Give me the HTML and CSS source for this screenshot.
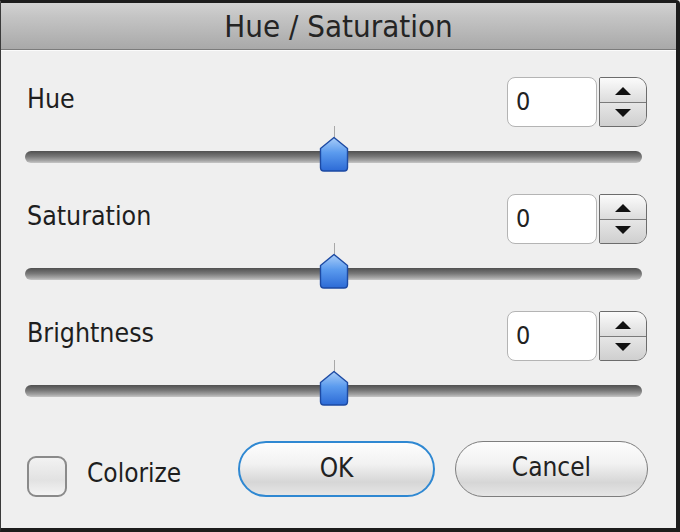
FILE: index.html
```html
<!DOCTYPE html>
<html>
<head>
<meta charset="utf-8">
<link rel="stylesheet" href="styles.css">
</head>
<body>
<div class="dialog">
  <div class="titlebar">Hue / Saturation</div>
  <div class="content">
    <div class="group">
      <div class="header">
        <span class="label">Hue</span>
        <div class="spin">
          <div class="field">0</div>
          <div class="stepper">
            <div class="step"><span class="arrow up"></span></div>
            <div class="step"><span class="arrow down"></span></div>
          </div>
        </div>
      </div>
      <div class="slider">
        <div class="track"></div>
        <div class="tick"></div>
        <svg class="thumb" width="32" height="37" viewBox="0 0 32 37">
          <defs>
            <linearGradient id="tg1" x1="0" y1="0" x2="0" y2="1">
              <stop offset="0" stop-color="#a9cdf8"/>
              <stop offset="0.45" stop-color="#5b9bee"/>
              <stop offset="1" stop-color="#2c6ad6"/>
            </linearGradient>
          </defs>
          <path d="M16 1.5 L29.5 12.5 V31.5 Q29.5 35 26 35 H6 Q2.5 35 2.5 31.5 V12.5 Z" fill="url(#tg1)" stroke="#1d4aa3" stroke-width="1.4" stroke-linejoin="round"/>
        </svg>
      </div>
    </div>
    <div class="group">
      <div class="header">
        <span class="label">Saturation</span>
        <div class="spin">
          <div class="field">0</div>
          <div class="stepper">
            <div class="step"><span class="arrow up"></span></div>
            <div class="step"><span class="arrow down"></span></div>
          </div>
        </div>
      </div>
      <div class="slider">
        <div class="track"></div>
        <div class="tick"></div>
        <svg class="thumb" width="32" height="37" viewBox="0 0 32 37">
          <defs>
            <linearGradient id="tg2" x1="0" y1="0" x2="0" y2="1">
              <stop offset="0" stop-color="#a9cdf8"/>
              <stop offset="0.45" stop-color="#5b9bee"/>
              <stop offset="1" stop-color="#2c6ad6"/>
            </linearGradient>
          </defs>
          <path d="M16 1.5 L29.5 12.5 V31.5 Q29.5 35 26 35 H6 Q2.5 35 2.5 31.5 V12.5 Z" fill="url(#tg2)" stroke="#1d4aa3" stroke-width="1.4" stroke-linejoin="round"/>
        </svg>
      </div>
    </div>
    <div class="group">
      <div class="header">
        <span class="label">Brightness</span>
        <div class="spin">
          <div class="field">0</div>
          <div class="stepper">
            <div class="step"><span class="arrow up"></span></div>
            <div class="step"><span class="arrow down"></span></div>
          </div>
        </div>
      </div>
      <div class="slider">
        <div class="track"></div>
        <div class="tick"></div>
        <svg class="thumb" width="32" height="37" viewBox="0 0 32 37">
          <defs>
            <linearGradient id="tg3" x1="0" y1="0" x2="0" y2="1">
              <stop offset="0" stop-color="#a9cdf8"/>
              <stop offset="0.45" stop-color="#5b9bee"/>
              <stop offset="1" stop-color="#2c6ad6"/>
            </linearGradient>
          </defs>
          <path d="M16 1.5 L29.5 12.5 V31.5 Q29.5 35 26 35 H6 Q2.5 35 2.5 31.5 V12.5 Z" fill="url(#tg3)" stroke="#1d4aa3" stroke-width="1.4" stroke-linejoin="round"/>
        </svg>
      </div>
    </div>
    <div class="footer">
      <div class="check"></div>
      <span class="check-label">Colorize</span>
      <div class="buttons">
        <div class="btn btn-default">OK</div>
        <div class="btn">Cancel</div>
      </div>
    </div>
  </div>
</div>
</body>
</html>
```
FILE: styles.css
```css
html, body {
  margin: 0;
  padding: 0;
  background: #efefef;
}
.dialog {
  width: 680px;
  height: 532px;
  box-sizing: border-box;
  border-top: 3px solid #1c1c1c;
  border-right: 4px solid #1c1c1c;
  border-bottom: 4px solid #1c1c1c;
  border-left: 1px solid #3a3a3a;
  border-top-right-radius: 4px;
  background: #efefef;
  font-family: "DejaVu Sans Condensed", "DejaVu Sans", sans-serif;
  font-stretch: condensed;
  color: #1e1e1e;
  display: flex;
  flex-direction: column;
  overflow: hidden;
}
.titlebar {
  height: 46px;
  flex: none;
  background: linear-gradient(#d2d2d2 0%, #c4c4c4 30%, #a9a9a9 100%);
  border-bottom: 1px solid #7c7c7c;
  box-shadow: 0 1px 0 #fbfbfb;
  text-align: center;
  font-size: 31px;
  line-height: 46px;
  color: #242424;
}
.content {
  padding: 27px 29px 0 24px;
  display: flex;
  flex-direction: column;
}
.group {
  display: flex;
  flex-direction: column;
  margin-bottom: 17px;
}
.header {
  height: 50px;
  display: flex;
  align-items: center;
  justify-content: space-between;
}
.label {
  font-size: 26.5px;
  padding-left: 2px;
  margin-top: -8px;
}
.spin {
  display: flex;
  gap: 2px;
  height: 50px;
}
.field {
  width: 90px;
  box-sizing: border-box;
  background: #fff;
  border: 1px solid #b4b4b4;
  border-radius: 8px;
  font-size: 25px;
  line-height: 48px;
  padding-left: 8px;
  color: #222;
}
.stepper {
  width: 48px;
  box-sizing: border-box;
  border: 1px solid #6c6c6c;
  border-radius: 2px 11px 11px 2px;
  display: flex;
  flex-direction: column;
  overflow: hidden;
}
.step {
  flex: 1;
  display: flex;
  align-items: center;
  justify-content: center;
  background: linear-gradient(#fbfbfb, #dcdcdc);
}
.step + .step {
  border-top: 1px solid #7a7a7a;
  background: linear-gradient(#e6e6e6, #cfcfcf);
}
.arrow {
  width: 0;
  height: 0;
  border-left: 8px solid transparent;
  border-right: 8px solid transparent;
}
.arrow.up {
  border-bottom: 8px solid #111;
  margin-top: 2px;
}
.arrow.down {
  border-top: 8px solid #111;
  margin-bottom: 2px;
}
.slider {
  position: relative;
  margin-top: 10px;
  height: 40px;
  margin-right: 5px;
  display: flex;
  align-items: center;
}
.track {
  width: 100%;
  height: 12px;
  border-radius: 6px;
  background: linear-gradient(#505050 0%, #777777 45%, #a4a4a4 80%, #c6c6c6 100%);
}
.tick {
  position: absolute;
  left: 309px;
  top: -11px;
  width: 1px;
  height: 13px;
  background: #a8a8a8;
}
.thumb {
  position: absolute;
  left: 293px;
  top: -1px;
}
.footer {
  margin-top: 13px;
  display: flex;
  align-items: flex-start;
  height: 56px;
}
.check {
  width: 40px;
  height: 41px;
  box-sizing: border-box;
  margin-top: 15px;
  margin-left: 2px;
  border: 2px solid #8a8a8a;
  border-radius: 9px;
  background: linear-gradient(#f2f2f2, #e2e2e2 60%, #f4f4f4);
}
.check-label {
  font-size: 26px;
  margin-left: 20px;
  margin-top: 17px;
}
.buttons {
  margin-left: auto;
  margin-right: -1px;
  display: flex;
  gap: 20px;
}
.btn {
  width: 193px;
  height: 56px;
  box-sizing: border-box;
  border: 1.5px solid #7e7e7e;
  border-radius: 28px;
  background: linear-gradient(#fdfdfd 0%, #f2f2f2 40%, #d6d6d6 75%, #e6e6e6 100%);
  font-size: 26px;
  text-align: center;
  line-height: 50px;
  color: #222;
}
.btn-default {
  width: 197px;
  border: 2px solid #2f88d2;
}
```
